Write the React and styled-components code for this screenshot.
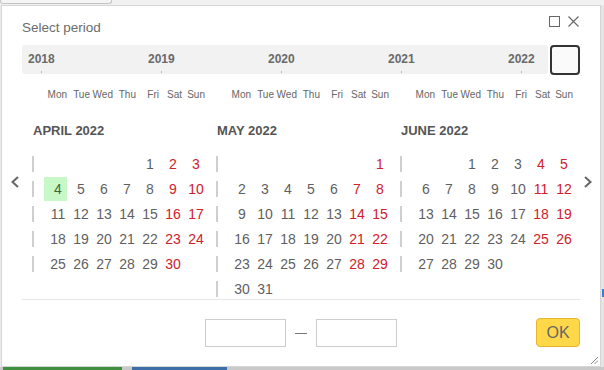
import React from 'react'
import styled, { createGlobalStyle } from 'styled-components'

const GlobalStyle = createGlobalStyle`
  html, body {
    margin: 0;
    padding: 0;
    background: #ececec;
    font-family: "Liberation Sans", Arial, sans-serif;
  }
`

const years = ['2018', '2019', '2020', '2021', '2022']
const weekdays = ['Mon', 'Tue', 'Wed', 'Thu', 'Fri', 'Sat', 'Sun']
const months = [
  { name: 'APRIL 2022', offset: 4, days: 30 },
  { name: 'MAY 2022', offset: 6, days: 31 },
  { name: 'JUNE 2022', offset: 2, days: 30 },
]

function weeksOf({ offset, days }) {
  const cells = Array(offset).fill(null)
  for (let d = 1; d <= days; d++) cells.push(d)
  const weeks = []
  for (let i = 0; i < cells.length; i += 7) weeks.push(cells.slice(i, i + 7))
  return weeks
}

export default function App() {
  return (
    <Page>
      <GlobalStyle />
      <TopEdge>
        <TopTab />
      </TopEdge>
      <Main>
        <Dialog>
          <Header>
            <Title>Select period</Title>
            <WindowButtons>
              <svg width="11" height="11" viewBox="0 0 11 11">
                <rect x="0.5" y="0.5" width="10" height="10" fill="none" stroke="#666" />
              </svg>
              <svg width="11" height="11" viewBox="0 0 11 11">
                <path d="M0.5 0.5 L10.5 10.5 M10.5 0.5 L0.5 10.5" stroke="#666" strokeWidth="1.1" />
              </svg>
            </WindowButtons>
          </Header>
          <YearRow>
            <YearTrack>
              {years.map((y) => (
                <YearSegment key={y}>
                  <YearLabel>
                    {y}
                    <Tick />
                  </YearLabel>
                </YearSegment>
              ))}
            </YearTrack>
            <Handle />
          </YearRow>
          <Calendar>
            <NavButton $pad={9}>
              <svg width="8" height="12" viewBox="0 0 8 12">
                <polyline points="7,1 1.5,6 7,11" fill="none" stroke="#666" strokeWidth="2" />
              </svg>
            </NavButton>
            <Months>
              {months.map((m) => (
                <Month key={m.name}>
                  <WeekHeader>
                    {weekdays.map((w) => (
                      <WeekDay key={w}>{w}</WeekDay>
                    ))}
                  </WeekHeader>
                  <MonthTitle>{m.name}</MonthTitle>
                  {weeksOf(m).map((week, i) => (
                    <WeekRow key={i}>
                      <RowBar />
                      <Days>
                        {week.map((d, j) => (
                          <Day
                            key={j}
                            $weekend={j >= 5}
                            $today={m.name === 'APRIL 2022' && d === 4}
                          >
                            {d}
                          </Day>
                        ))}
                      </Days>
                    </WeekRow>
                  ))}
                </Month>
              ))}
            </Months>
            <NavButton $pad={11}>
              <svg width="8" height="12" viewBox="0 0 8 12">
                <polyline points="1,1 6.5,6 1,11" fill="none" stroke="#666" strokeWidth="2" />
              </svg>
            </NavButton>
          </Calendar>
          <Footer>
            <span />
            <Range>
              <DateInput />
              <Dash />
              <DateInput />
            </Range>
            <OkButton>OK</OkButton>
          </Footer>
          <Grip>
            <svg width="8" height="8" viewBox="0 0 8 8">
              <path d="M1 8 L8 1 M4.5 8 L8 4.5" stroke="#888" strokeWidth="1" />
            </svg>
          </Grip>
        </Dialog>
        <SideStrip>
          <SideMark />
        </SideStrip>
      </Main>
      <TaskRow>
        <Task $color="#3f8f3f" $width={119} $left={3} />
        <Task $color="#3d6ea6" $width={95} $left={10} />
      </TaskRow>
    </Page>
  )
}

const Page = styled.div`
  width: 604px;
  height: 370px;
  overflow: hidden;
  display: flex;
  flex-direction: column;
`
const TopEdge = styled.div`
  height: 5px;
  background: #f1f1f1;
`
const TopTab = styled.div`
  width: 110px;
  height: 3px;
  border: 1px solid #c4c4c4;
  border-top: none;
  border-radius: 0 0 3px 3px;
  background: #f4f4f4;
`
const Main = styled.div`
  display: flex;
  height: 362px;
`
const Dialog = styled.div`
  position: relative;
  box-sizing: border-box;
  width: 600px;
  height: 362px;
  margin-left: 1px;
  background: #fff;
  border: 1px solid #d6d6d6;
  display: flex;
  flex-direction: column;
`
const Header = styled.div`
  display: flex;
  justify-content: space-between;
  align-items: flex-start;
  height: 39px;
  padding: 0 21px 0 20px;
`
const Title = styled.div`
  margin-top: 14px;
  font-size: 13.5px;
  line-height: 16px;
  color: #6c6c6c;
`
const WindowButtons = styled.div`
  display: flex;
  gap: 8px;
  margin-top: 10px;
`
const YearRow = styled.div`
  display: flex;
  gap: 2px;
  padding: 0 20px;
  height: 29px;
`
const YearTrack = styled.div`
  flex: 1;
  display: flex;
  overflow: hidden;
  background: #f2f2f2;
  border-radius: 3px;
`
const YearSegment = styled.div`
  box-sizing: border-box;
  flex: 0 0 120px;
  padding-left: 6px;
`
const YearLabel = styled.div`
  display: inline-flex;
  flex-direction: column;
  align-items: center;
  padding-top: 7px;
  font-size: 12px;
  line-height: 14px;
  font-weight: bold;
  color: #6a6a6a;
`
const Tick = styled.span`
  width: 1px;
  height: 2px;
  margin-top: 5px;
  background: #bbb;
`
const Handle = styled.div`
  box-sizing: border-box;
  width: 30px;
  height: 30px;
  border: 2px solid #333;
  border-radius: 4px;
  background: #fafafa;
`
const Calendar = styled.div`
  display: flex;
  height: 225px;
  overflow: visible;
`
const NavButton = styled.div`
  flex: 1;
  padding-left: ${(p) => p.$pad}px;
  padding-top: 100px;
  &:first-child {
    flex: 0 0 30px;
    box-sizing: border-box;
  }
`
const Months = styled.div`
  display: flex;
  gap: 11px;
`
const Month = styled.div`
  width: 173px;
`
const WeekHeader = styled.div`
  display: grid;
  grid-template-columns: repeat(7, 23px);
  margin: 11px 0 0 12px;
  height: 20px;
  line-height: 20px;
`
const WeekDay = styled.span`
  font-size: 10px;
  color: #666;
  text-align: right;
`
const MonthTitle = styled.div`
  padding: 16px 0 10px 1px;
  font-size: 13px;
  line-height: 20px;
  font-weight: bold;
  color: #555;
`
const WeekRow = styled.div`
  display: flex;
  align-items: center;
  height: 25px;
`
const RowBar = styled.span`
  width: 2px;
  height: 16px;
  margin-right: 10px;
  background: #cfcfcf;
`
const Days = styled.div`
  display: grid;
  grid-template-columns: repeat(7, 23px);
`
const Day = styled.span`
  height: 24px;
  padding-left: 5px;
  line-height: 24px;
  font-size: 14px;
  text-align: center;
  color: ${(p) => (p.$today ? '#3b6b3b' : p.$weekend ? '#d0212b' : '#5f5f5f')};
  background: ${(p) => (p.$today ? '#c8f8c8' : 'transparent')};
`
const Footer = styled.div`
  display: grid;
  grid-template-columns: 1fr auto 1fr;
  align-items: start;
  margin: 0 20px;
  padding-top: 19px;
  border-top: 1px solid #e6e6e6;
`
const Range = styled.div`
  display: flex;
  align-items: center;
  gap: 9px;
`
const DateInput = styled.div`
  box-sizing: border-box;
  width: 81px;
  height: 28px;
  border: 1px solid #cdcdcd;
  background: #fff;
`
const Dash = styled.span`
  width: 12px;
  height: 1px;
  background: #777;
`
const OkButton = styled.button`
  justify-self: end;
  box-sizing: border-box;
  width: 44px;
  height: 29px;
  margin-top: -1px;
  border: 1px solid #e3b72c;
  border-radius: 4px;
  background: #ffd84a;
  font-family: inherit;
  font-size: 16px;
  color: #666;
  padding: 0;
`
const Grip = styled.div`
  position: absolute;
  right: 2px;
  bottom: 2px;
  line-height: 0;
`
const SideStrip = styled.div`
  width: 3px;
  background: #e4e4e4;
  padding-top: 284px;
`
const SideMark = styled.div`
  width: 2px;
  height: 8px;
  margin-left: 1px;
  background: #3d7fd0;
`
const TaskRow = styled.div`
  display: flex;
  height: 3px;
  background: #c9c9c9;
`
const Task = styled.span`
  width: ${(p) => p.$width}px;
  margin-left: ${(p) => p.$left}px;
  background: ${(p) => p.$color};
`
